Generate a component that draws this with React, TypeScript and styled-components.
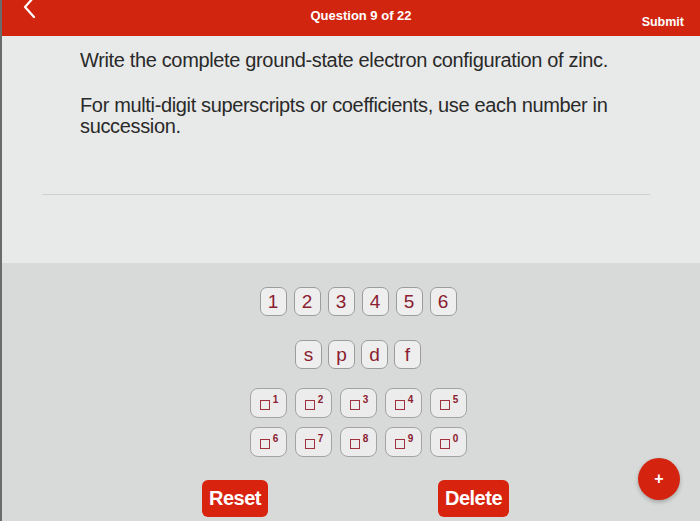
import styled, { createGlobalStyle } from "styled-components";

const GlobalStyle = createGlobalStyle`
  html, body {
    margin: 0;
    padding: 0;
    background: #d6d8d8;
    font-family: "Liberation Sans", Arial, sans-serif;
  }
`;

const numbers = ["1", "2", "3", "4", "5", "6"];
const orbitals = ["s", "p", "d", "f"];
const supRows = [
  ["1", "2", "3", "4", "5"],
  ["6", "7", "8", "9", "0"],
];

const App = () => {
  return (
    <Page>
      <GlobalStyle />
      <Header>
        <Back>
          <svg width="14" height="18" viewBox="0 0 14 18" overflow="visible">
            <path d="M12 -4 L3 6 L12 16" fill="none" stroke="#fff" strokeWidth="2.2" strokeLinecap="round" strokeLinejoin="round" />
          </svg>
        </Back>
        <Title>Question 9 of 22</Title>
        <Submit>Submit</Submit>
      </Header>
      <Question>
        <Prompt>Write the complete ground-state electron configuration of zinc.</Prompt>
        <Prompt>For multi-digit superscripts or coefficients, use each number in succession.</Prompt>
        <Divider />
      </Question>
      <Keypad>
        <KeyRow $gap={7}>
          {numbers.map((n) => (
            <Key key={n}>{n}</Key>
          ))}
        </KeyRow>
        <KeyRow $gap={6} $after={19}>
          {orbitals.map((o) => (
            <Key key={o}>{o}</Key>
          ))}
        </KeyRow>
        <SupGrid>
          {supRows.map((row, i) => (
            <KeyRow key={i} $gap={8} $after={9}>
              {row.map((d) => (
                <SupKey key={d}>
                  <Box />
                  <Sup>{d}</Sup>
                </SupKey>
              ))}
            </KeyRow>
          ))}
        </SupGrid>
        <Actions>
          <ActionButton>Reset</ActionButton>
          <ActionButton>Delete</ActionButton>
        </Actions>
        <Fab>+</Fab>
      </Keypad>
    </Page>
  );
};

const Page = styled.div`
  width: 700px;
  height: 521px;
  display: flex;
  flex-direction: column;
  overflow: hidden;
  border-left: 2px solid #6b6b6b;
  box-sizing: border-box;
`;

const Header = styled.header`
  height: 36px;
  background: #d1250f;
  display: grid;
  grid-template-columns: 1fr auto 1fr;
  align-items: center;
  padding: 0 16px 0 20px;
  color: #fff;
  flex-shrink: 0;
`;

const Back = styled.div`
  align-self: start;
  padding-top: 1px;
`;

const Title = styled.div`
  font-size: 13px;
  font-weight: bold;
  margin-left: 16px;
  margin-top: -6px;
`;

const Submit = styled.div`
  justify-self: end;
  font-size: 12.5px;
  font-weight: bold;
  margin-top: 8px;
`;

const Question = styled.section`
  height: 227px;
  background: #e8e9e9;
  padding: 14px 80px 0 78px;
  box-sizing: border-box;
  display: flex;
  flex-direction: column;
  flex-shrink: 0;
`;

const Prompt = styled.p`
  margin: 0 0 24px;
  font-size: 20px;
  line-height: 21px;
  color: #2a2a2a;
  letter-spacing: -0.35px;
`;

const Divider = styled.div`
  height: 1px;
  background: #cfd0d0;
  margin: 33px -30px 0 -38px;
`;

const Keypad = styled.section`
  flex: 1;
  position: relative;
  background: #d8dada;
  display: flex;
  flex-direction: column;
  align-items: center;
  padding: 24px 0 0 14px;
`;

const KeyRow = styled.div<{ $gap: number; $after?: number }>`
  display: flex;
  gap: ${(p) => p.$gap}px;
  margin-bottom: ${(p) => p.$after ?? 24}px;
`;

const Key = styled.button`
  width: 27px;
  height: 29px;
  padding: 0;
  border: 1px solid #9c9c9c;
  border-radius: 7px;
  background: #eeeeee;
  color: #8a2030;
  font-family: "Liberation Sans", Arial, sans-serif;
  font-size: 19px;
  display: flex;
  align-items: center;
  justify-content: center;
`;

const SupGrid = styled.div`
  display: flex;
  flex-direction: column;
`;

const SupKey = styled.button`
  width: 37px;
  height: 30px;
  padding: 0 0 0 2px;
  border: 1px solid #a3a3a3;
  border-radius: 8px;
  background: #ececec;
  display: flex;
  align-items: center;
  justify-content: center;
  gap: 3px;
`;

const Box = styled.span`
  width: 8px;
  height: 8px;
  border: 1.4px solid #a0303e;
  margin-top: 4px;
`;

const Sup = styled.span`
  font-family: "Liberation Sans", Arial, sans-serif;
  font-size: 10px;
  font-weight: bold;
  color: #8a2030;
  margin-top: -7px;
`;

const Actions = styled.div`
  align-self: stretch;
  display: flex;
  gap: 170px;
  padding-left: 186px;
  margin-top: 14px;
`;

const ActionButton = styled.button`
  height: 37px;
  padding: 0 7px;
  border: none;
  border-radius: 6px;
  background: #d8240f;
  color: #fff;
  font-family: "Liberation Sans", Arial, sans-serif;
  font-size: 20px;
  font-weight: bold;
  letter-spacing: -0.5px;
`;

const Fab = styled.div`
  position: absolute;
  left: 636px;
  top: 195px;
  width: 42px;
  height: 42px;
  border-radius: 50%;
  background: #d4240f;
  color: #fff;
  font-size: 16px;
  font-weight: bold;
  display: flex;
  align-items: center;
  justify-content: center;
  box-shadow: 0 2px 4px rgba(0, 0, 0, 0.25);
`;

export default App;
